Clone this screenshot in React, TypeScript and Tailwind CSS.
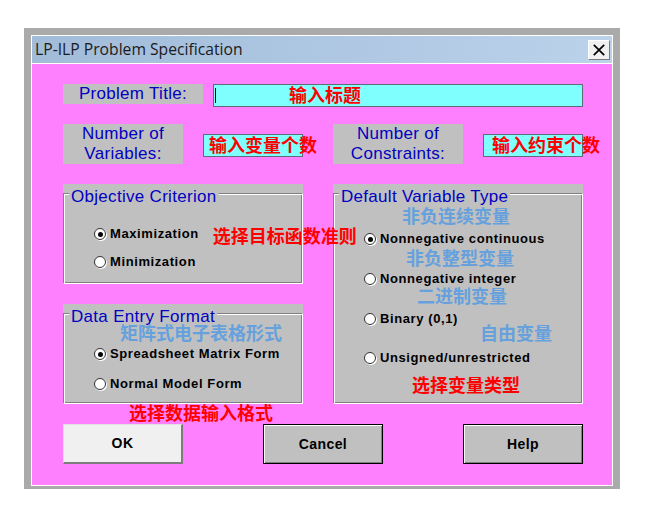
import React from "react";

function Radio({ label, checked }: { label: string; checked?: boolean }) {
  return (
    <div className="flex items-center h-[20px] shrink-0">
      <span className="w-[12px] h-[12px] rounded-full bg-white border border-[#303030] shadow-[1px_1px_0_#ffffff] flex items-center justify-center shrink-0">
        {checked ? <span className="w-[5px] h-[5px] rounded-full bg-black" /> : null}
      </span>
      <span className="ml-[4px] text-[13px] font-bold tracking-[0.6px] text-black whitespace-nowrap leading-[20px]">
        {label}
      </span>
    </div>
  );
}

function Frame() {
  return (
    <>
      <div className="absolute left-0 top-[9px] right-[1px] bottom-[1px] border border-[#808080]" />
      <div className="absolute left-[1px] top-[10px] right-0 bottom-0 border border-white" />
    </>
  );
}

function Legend({ children, ml }: { children: React.ReactNode; ml: string }) {
  return (
    <div
      className={`relative self-start ${ml} mt-[3px] px-[2px] h-[20px] bg-[#c0c0c0] text-[17px] leading-[20px] tracking-[0.3px] text-[#0000c0] whitespace-nowrap`}
    >
      {children}
    </div>
  );
}

function Blue({ children, cls }: { children: React.ReactNode; cls: string }) {
  return (
    <div
      className={`relative h-[20px] leading-[20px] text-[18px] font-bold text-[#66a0dd] whitespace-nowrap ${cls}`}
    >
      {children}
    </div>
  );
}

export default function App() {
  return (
    <div className="w-[652px] h-[520px] bg-white pt-[28px] pl-[24px] font-['Liberation_Sans','Noto_Sans_CJK_SC',sans-serif]">
      <div className="w-[596px] h-[461px] bg-[#aaaaaa] pt-[7px] pl-[7px]">
        <div className="w-[582px] h-[451px] border border-white flex flex-col">
          {/* title bar */}
          <div className="h-[27px] shrink-0 flex items-center justify-between pl-[3px] pr-[2px] bg-linear-to-r from-[#a1bbd9] to-[#bbd2ea] border-b border-white box-content">
            <span className="font-['Open_Sans',sans-serif] text-[15.7px] text-[#1b1b1b] leading-none">
              LP-ILP Problem Specification
            </span>
            <div className="w-[22px] h-[20px] bg-[#f0f0f0] border border-t-white border-l-white border-r-[#7a7a7a] border-b-[#7a7a7a] flex items-center justify-center">
              <svg width="12" height="12" viewBox="0 0 12 12">
                <path d="M0.8 0.8 L11.2 11.2 M11.2 0.8 L0.8 11.2" stroke="#000" strokeWidth="1.7" />
              </svg>
            </div>
          </div>

          {/* body */}
          <div className="flex-1 bg-[#ff80ff] pl-[31px] pt-[20px] flex flex-col">
            {/* row 1 */}
            <div className="flex items-start h-[23px]">
              <div className="w-[140px] h-[20px] bg-[#c0c0c0] text-[17px] leading-[20px] tracking-[0.3px] text-[#0000c0] text-center">
                Problem Title:
              </div>
              <div className="ml-[10px] w-[370px] h-[23px] bg-[#80ffff] border border-[#5e6b78] flex items-center">
                <span className="ml-[1px] w-[1px] h-[15px] bg-black" />
                <span className="ml-[73px] text-[18px] font-bold text-[#ff0000] leading-[20px] whitespace-nowrap">
                  输入标题
                </span>
              </div>
            </div>

            {/* row 2 */}
            <div className="flex items-start mt-[17px]">
              <div className="w-[120px] h-[40px] bg-[#c0c0c0] text-[17px] leading-[20px] tracking-[0.3px] text-[#0000c0] text-center">
                Number of
                <br />
                Variables:
              </div>
              <div className="ml-[20px] mt-[10px] w-[100px] h-[23px] bg-[#80ffff] border border-[#5e6b78] flex items-center pl-[5px]">
                <span className="text-[18px] font-bold text-[#ff0000] leading-[20px] whitespace-nowrap">
                  输入变量个数
                </span>
              </div>
              <div className="ml-[30px] w-[130px] h-[40px] bg-[#c0c0c0] text-[17px] leading-[20px] tracking-[0.3px] text-[#0000c0] text-center">
                Number of
                <br />
                Constraints:
              </div>
              <div className="ml-[20px] mt-[10px] w-[100px] h-[23px] bg-[#80ffff] border border-[#5e6b78] flex items-center pl-[8px]">
                <span className="text-[18px] font-bold text-[#ff0000] leading-[20px] whitespace-nowrap">
                  输入约束个数
                </span>
              </div>
            </div>

            {/* groups */}
            <div className="flex mt-[20px]">
              <div className="w-[240px] flex flex-col">
                <div className="relative h-[100px] bg-[#c0c0c0] flex flex-col">
                  <Frame />
                  <Legend ml="ml-[6px]">Objective Criterion</Legend>
                  <div className="mt-[17px] pl-[31px] flex items-center">
                    <Radio label="Maximization" checked />
                    <span className="relative z-10 top-[3px] ml-[14px] text-[18px] font-bold text-[#ff0000] leading-[20px] whitespace-nowrap">
                      选择目标函数准则
                    </span>
                  </div>
                  <div className="mt-[8px] pl-[31px]">
                    <Radio label="Minimization" />
                  </div>
                </div>
                <div className="relative mt-[20px] h-[100px] bg-[#c0c0c0] flex flex-col">
                  <Frame />
                  <Legend ml="ml-[6px]">Data Entry Format</Legend>
                  <Blue cls="mt-[-3px] pl-[57px]">矩阵式电子表格形式</Blue>
                  <div className="pl-[31px]">
                    <Radio label="Spreadsheet Matrix Form" checked />
                  </div>
                  <div className="mt-[10px] pl-[31px]">
                    <Radio label="Normal Model Form" />
                  </div>
                </div>
              </div>

              <div className="relative ml-[30px] w-[250px] h-[220px] bg-[#c0c0c0] flex flex-col">
                <Frame />
                <Legend ml="ml-[6px]">Default Variable Type</Legend>
                <Blue cls="mt-0 pl-[69px]">非负连续变量</Blue>
                <div className="mt-[2px] pl-[31px]">
                  <Radio label="Nonnegative continuous" checked />
                </div>
                <Blue cls="mt-0 pl-[73px]">非负整型变量</Blue>
                <div className="mt-0 pl-[31px]">
                  <Radio label="Nonnegative integer" />
                </div>
                <Blue cls="mt-[-2px] pl-[84px]">二进制变量</Blue>
                <div className="mt-[2px] pl-[31px]">
                  <Radio label="Binary (0,1)" />
                </div>
                <Blue cls="mt-[-5px] pl-[147px]">自由变量</Blue>
                <div className="mt-[4px] pl-[31px]">
                  <Radio label="Unsigned/unrestricted" />
                </div>
                <div className="relative mt-[8px] pl-[79px] h-[20px] leading-[20px] text-[18px] font-bold text-[#ff0000] whitespace-nowrap">
                  选择变量类型
                </div>
              </div>
            </div>

            {/* red caption */}
            <div className="h-[20px] leading-[20px] pl-[66px] text-[18px] font-bold text-[#ff0000] whitespace-nowrap">
              选择数据输入格式
            </div>

            {/* buttons */}
            <div className="flex gap-[80px]">
              <div className="w-[120px] h-[40px] bg-[#f0f0f0] border-t border-l border-t-[#e2e2e2] border-l-[#e2e2e2] border-b-2 border-r-2 border-b-[#7c7c7c] border-r-[#7c7c7c] flex items-center justify-center text-[14px] font-bold tracking-[0.4px] text-black">
                OK
              </div>
              <div className="w-[120px] h-[40px] bg-[#c0c0c0] border border-black shadow-[inset_1px_1px_0_#ffffff,inset_-1px_-1px_0_#808080] flex items-center justify-center text-[14px] font-bold tracking-[0.4px] text-black">
                Cancel
              </div>
              <div className="w-[120px] h-[40px] bg-[#c0c0c0] border border-black shadow-[inset_1px_1px_0_#ffffff,inset_-1px_-1px_0_#808080] flex items-center justify-center text-[14px] font-bold tracking-[0.4px] text-black">
                Help
              </div>
            </div>
          </div>
        </div>
      </div>
    </div>
  );
}
